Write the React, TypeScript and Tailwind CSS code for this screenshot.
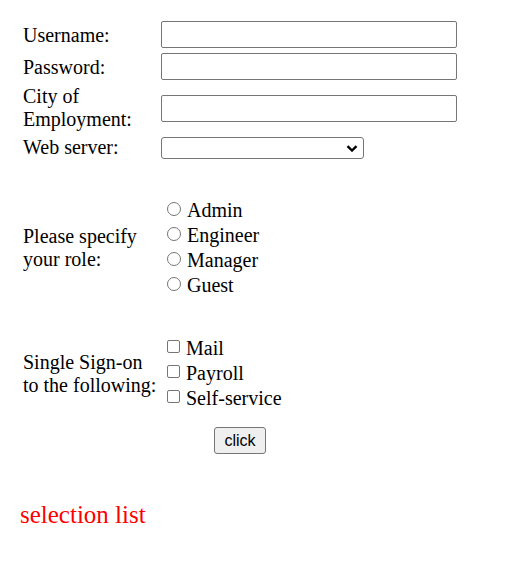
const roles = ['Admin', 'Engineer', 'Manager', 'Guest'];
const apps = ['Mail', 'Payroll', 'Self-service'];

const App = () => {
  return (
    <div className="font-['Liberation_Serif',serif] text-[20px] text-black bg-white w-[512px] min-h-[578px]">
      <form className="pt-[21px] pl-[23px] w-[457px]">
        <div className="grid grid-cols-[138px_296px] gap-y-[5px] items-center">
          <label className="leading-[23px] pt-[1px]">Username:</label>
          <input type="text" className="h-[27px] w-[296px] border border-[#767676] rounded-[2px]" />
          <label className="leading-[23px] pt-[1px]">Password:</label>
          <input type="password" className="h-[27px] w-[296px] border border-[#767676] rounded-[2px]" />
          <label className="leading-[23px]">
            City of
            <br />
            Employment:
          </label>
          <input type="text" className="h-[27px] w-[296px] border border-[#767676] rounded-[2px]" />
          <label className="leading-[23px]">Web server:</label>
          <div className="relative w-[203px] h-[22px]">
            <select className="appearance-none w-[203px] h-[22px] border border-[#767676] rounded-[3px] bg-white"></select>
            <svg className="absolute left-[185px] top-[8px] pointer-events-none" width="12" height="7" viewBox="0 0 12 7">
              <path d="M1.5 1.2 L6 5.5 L10.5 1.2" fill="none" stroke="#000" strokeWidth="2.4" />
            </svg>
          </div>
        </div>

        <div className="flex items-center mt-[39px]">
          <label className="w-[138px] leading-[23px]">
            Please specify
            <br />
            your role:
          </label>
          <div className="flex flex-col">
            {roles.map((r) => (
              <label key={r} className="flex items-start h-[25px] leading-[25px]">
                <input
                  type="radio"
                  name="role"
                  className="appearance-none m-0 mt-[4px] ml-[6px] w-[14px] h-[14px] rounded-full border border-[#767676] bg-white"
                />
                <span className="ml-[6px]">{r}</span>
              </label>
            ))}
          </div>
        </div>

        <div className="flex items-center mt-[38px]">
          <label className="w-[138px] leading-[23px]">
            Single Sign-on
            <br />
            to the following:
          </label>
          <div className="flex flex-col">
            {apps.map((a) => (
              <label key={a} className="flex items-start h-[25px] leading-[25px]">
                <input
                  type="checkbox"
                  className="appearance-none m-0 mt-[4px] ml-[6px] w-[13px] h-[13px] rounded-[2px] border border-[#767676] bg-white"
                />
                <span className="ml-[6px]">{a}</span>
              </label>
            ))}
          </div>
        </div>

        <div className="flex justify-center w-[434px] mt-[16px]">
          <button
            type="button"
            className="h-[27px] w-[52px] font-['Liberation_Sans',Arial,sans-serif] text-[16px] bg-[#efefef] border border-[#767676] rounded-[3px] text-black"
          >
            click
          </button>
        </div>
      </form>

      <div className="ml-[20px] mt-[42px] text-[25px] text-[#ff0000]">selection list</div>
    </div>
  );
};

export default App;
